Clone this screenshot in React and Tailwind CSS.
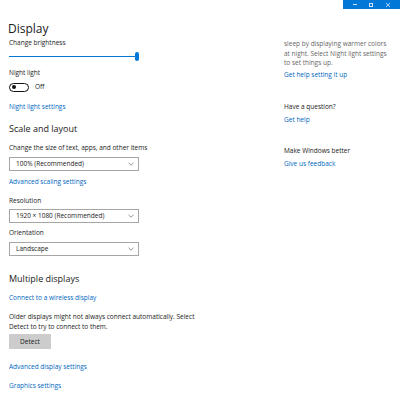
import React from "react";

const font = { fontFamily: '"Open Sans", "Noto Sans", sans-serif' };

function Link({ children, className = "" }) {
  return (
    <div className={`h-[10px] leading-[10px] text-[6.5px] text-[#0067c0] ${className}`}>
      {children}
    </div>
  );
}

function Label({ children, className = "" }) {
  return (
    <div className={`h-[10px] leading-[10px] text-[6.5px] text-[#1a1a1a] ${className}`}>
      {children}
    </div>
  );
}

function Dropdown({ value, className = "" }) {
  return (
    <div
      className={`flex h-[14px] w-[130px] items-center justify-between border-[1.5px] border-[#a6a6a6] pl-[6px] pr-[4px] text-[6.5px] text-[#1a1a1a] ${className}`}
    >
      <span>{value}</span>
      <svg width="6" height="4" viewBox="0 0 6 4" fill="none">
        <path d="M0.5 0.8 L3 3.2 L5.5 0.8" stroke="#777" strokeWidth="0.8" />
      </svg>
    </div>
  );
}

export default function App() {
  return (
    <div className="relative h-[409px] w-[400px] overflow-hidden bg-white" style={font}>
      {/* window caption buttons */}
      <div className="absolute right-0 top-0 flex h-[9px] w-[57px] items-center justify-around bg-[#0078d7] px-[4px]">
        <span className="h-[0.8px] w-[4px] bg-white/80" />
        <span className="h-[4px] w-[4px] border-[0.8px] border-white/80" />
        <svg width="4" height="4" viewBox="0 0 4 4">
          <path d="M0 0 L4 4 M4 0 L0 4" stroke="rgba(255,255,255,0.8)" strokeWidth="0.8" />
        </svg>
      </div>

      <div className="flex">
        {/* left column */}
        <div className="flex w-[275px] flex-col pl-[9px] pt-[22px]">
          <div className="-ml-[1px] h-[14px] text-[12px] leading-[14px] text-[#1a1a1a]">Display</div>
          <Label className="mt-[2px]">Change brightness</Label>
          <div className="relative mt-[4px] flex h-[9px] w-[130px] items-center">
            <div className="h-[1.5px] w-[127px] bg-[#0078d7]" />
            <div className="absolute left-[126px] top-0 h-[9px] w-[4px] rounded-[2px] bg-[#0078d7]" />
          </div>
          <Label className="mt-[7px]">Night light</Label>
          <div className="mt-[4px] flex h-[10px] items-center">
            <div className="flex h-[9px] w-[20px] items-center rounded-full border-[1.5px] border-[#111] pl-[2px]">
              <span className="h-[4px] w-[4px] rounded-full bg-[#111]" />
            </div>
            <span className="ml-[6px] text-[6.5px] text-[#1a1a1a]">Off</span>
          </div>
          <Link className="mt-[10px]">Night light settings</Link>

          <div className="mt-[11px] h-[12px] text-[9px] leading-[12px] text-[#1a1a1a]">Scale and layout</div>
          <Label className="mt-[8px]">Change the size of text, apps, and other items</Label>
          <Dropdown value="100% (Recommended)" className="mt-[4px]" />
          <Link className="mt-[6px]">Advanced scaling settings</Link>
          <Label className="mt-[9px]">Resolution</Label>
          <Dropdown value="1920 × 1080 (Recommended)" className="mt-[3px]" />
          <Label className="mt-[5px]">Orientation</Label>
          <Dropdown value="Landscape" className="mt-[4px]" />

          <div className="mt-[17px] h-[12px] text-[9px] leading-[12px] text-[#1a1a1a]">Multiple displays</div>
          <Link className="mt-[8px]">Connect to a wireless display</Link>
          <div className="mt-[9px] text-[6.5px] leading-[10px] text-[#1a1a1a]">
            Older displays might not always connect automatically. Select
            <br />
            Detect to try to connect to them.
          </div>
          <div className="mt-[2px] flex h-[15px] w-[42px] items-center justify-center bg-[#cccccc] text-[6.5px] text-[#1a1a1a]">
            Detect
          </div>
          <Link className="mt-[13px]">Advanced display settings</Link>
          <Link className="mt-[9px]">Graphics settings</Link>
        </div>

        {/* right column */}
        <div className="flex flex-col pl-[9px] pt-[39px]">
          <div className="text-[6.5px] leading-[9.5px] text-[#666]">
            sleep by displaying warmer colors
            <br />
            at night. Select Night light settings
            <br />
            to set things up.
          </div>
          <Link className="mt-[2.5px]">Get help setting it up</Link>
          <Label className="mt-[22px]">Have a question?</Label>
          <Link className="mt-[3px]">Get help</Link>
          <Label className="mt-[21px]">Make Windows better</Label>
          <Link className="mt-[3px]">Give us feedback</Link>
        </div>
      </div>
    </div>
  );
}
